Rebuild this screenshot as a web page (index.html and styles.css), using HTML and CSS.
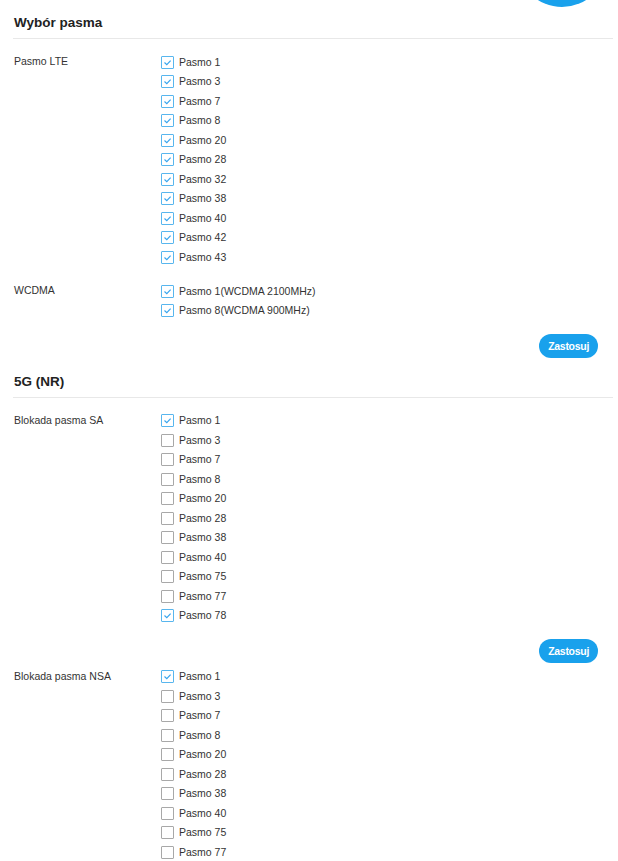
FILE: index.html
```html
<!DOCTYPE html>
<html lang="pl">
<head>
  <meta charset="UTF-8">
  <meta name="viewport" content="width=device-width, initial-scale=1.0">
  <title>Wybór pasma</title>
  <link rel="stylesheet" href="styles.css">
</head>
<body>
  <div class="fab"></div>
  <div class="page">

    <!-- LTE / WCDMA -->
    <h2 class="section-title">Wybór pasma</h2>
    <div class="group">
      <div class="group-label">Pasmo LTE</div>
      <div class="options">
        <label class="option"><span class="box checked"></span>Pasmo 1</label>
        <label class="option"><span class="box checked"></span>Pasmo 3</label>
        <label class="option"><span class="box checked"></span>Pasmo 7</label>
        <label class="option"><span class="box checked"></span>Pasmo 8</label>
        <label class="option"><span class="box checked"></span>Pasmo 20</label>
        <label class="option"><span class="box checked"></span>Pasmo 28</label>
        <label class="option"><span class="box checked"></span>Pasmo 32</label>
        <label class="option"><span class="box checked"></span>Pasmo 38</label>
        <label class="option"><span class="box checked"></span>Pasmo 40</label>
        <label class="option"><span class="box checked"></span>Pasmo 42</label>
        <label class="option"><span class="box checked"></span>Pasmo 43</label>
      </div>
    </div>
    <div class="group">
      <div class="group-label">WCDMA</div>
      <div class="options">
        <label class="option"><span class="box checked"></span>Pasmo 1(WCDMA 2100MHz)</label>
        <label class="option"><span class="box checked"></span>Pasmo 8(WCDMA 900MHz)</label>
      </div>
    </div>
    <div class="actions"><button class="btn">Zastosuj</button></div>

    <!-- 5G -->
    <h2 class="section-title">5G (NR)</h2>
    <div class="group">
      <div class="group-label">Blokada pasma SA</div>
      <div class="options">
        <label class="option"><span class="box checked"></span>Pasmo 1</label>
        <label class="option"><span class="box"></span>Pasmo 3</label>
        <label class="option"><span class="box"></span>Pasmo 7</label>
        <label class="option"><span class="box"></span>Pasmo 8</label>
        <label class="option"><span class="box"></span>Pasmo 20</label>
        <label class="option"><span class="box"></span>Pasmo 28</label>
        <label class="option"><span class="box"></span>Pasmo 38</label>
        <label class="option"><span class="box"></span>Pasmo 40</label>
        <label class="option"><span class="box"></span>Pasmo 75</label>
        <label class="option"><span class="box"></span>Pasmo 77</label>
        <label class="option"><span class="box checked"></span>Pasmo 78</label>
      </div>
    </div>
    <div class="actions"><button class="btn">Zastosuj</button></div>

    <div class="group">
      <div class="group-label">Blokada pasma NSA</div>
      <div class="options">
        <label class="option"><span class="box checked"></span>Pasmo 1</label>
        <label class="option"><span class="box"></span>Pasmo 3</label>
        <label class="option"><span class="box"></span>Pasmo 7</label>
        <label class="option"><span class="box"></span>Pasmo 8</label>
        <label class="option"><span class="box"></span>Pasmo 20</label>
        <label class="option"><span class="box"></span>Pasmo 28</label>
        <label class="option"><span class="box"></span>Pasmo 38</label>
        <label class="option"><span class="box"></span>Pasmo 40</label>
        <label class="option"><span class="box"></span>Pasmo 75</label>
        <label class="option"><span class="box"></span>Pasmo 77</label>
      </div>
    </div>
  </div>
</body>
</html>
```

FILE: styles.css
```css
body {
  margin: 0;
  font-family: "Liberation Sans", Arial, sans-serif;
  color: #333;
  background: #fff;
  overflow: hidden;
}
.fab {
  position: absolute;
  left: 517px;
  top: -83px;
  width: 90px;
  height: 90px;
  border-radius: 50%;
  background: #19a1ec;
}
.page {
  padding: 3px 5px 0 13px;
}
.section-title {
  margin: 0;
  padding: 10px 1px 5px;
  font-size: 13.5px;
  line-height: 20px;
  font-weight: bold;
  color: #222;
  border-bottom: 1px solid #e8e8e8;
}
.section-title + .group {
  margin-top: 13px;
}
.group {
  display: flex;
}
.group + .group {
  margin-top: 14.5px;
}
.group-label {
  width: 147px;
  padding-left: 1px;
  font-size: 10.5px;
  line-height: 19.5px;
}
.options {
  display: flex;
  flex-direction: column;
}
.option {
  display: flex;
  align-items: center;
  height: 19.5px;
  font-size: 10.5px;
}
.box {
  width: 11px;
  height: 11px;
  margin: 1px 5px 0 0;
  border: 1px solid #a8a8a8;
  border-radius: 1px;
  background: #fff;
}
.box.checked {
  border-color: #58b6ee;
  background: no-repeat center / 9px 9px url("data:image/svg+xml,%3Csvg xmlns='http://www.w3.org/2000/svg' viewBox='0 0 9 9'%3E%3Cpolyline points='1.5,4.5 3.8,6.6 7.6,2.6' fill='none' stroke='%2339a6ee' stroke-width='1.2'/%3E%3C/svg%3E");
}
.actions {
  display: flex;
  justify-content: flex-end;
  margin: 13.5px 15px 4px 0;
}
.btn {
  height: 24px;
  padding: 0 9px;
  border: none;
  border-radius: 12px;
  background: #19a1ec;
  color: #fff;
  font-family: inherit;
  font-size: 10.5px;
  font-weight: bold;
  letter-spacing: -0.3px;
  cursor: pointer;
}
```
